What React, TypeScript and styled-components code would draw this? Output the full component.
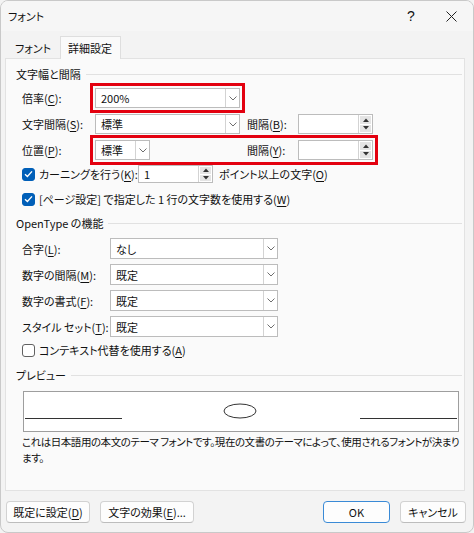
import React from 'react';
import styled, { createGlobalStyle } from 'styled-components';

const GlobalStyle = createGlobalStyle`
  html, body {
    margin: 0;
    padding: 0;
    background: #f3f3f3;
  }
  body {
    font-family: "Noto Sans CJK JP", "Noto Sans", sans-serif;
    font-size: 11px;
    color: #111;
    font-feature-settings: "palt" 1;
  }
  * {
    box-sizing: border-box;
  }
  u {
    text-underline-offset: 2px;
  }
`;

const Dialog = styled.div`
  width: 474px;
  height: 533px;
  display: flex;
  flex-direction: column;
  background: #f3f3f3;
  border: 1px solid #c9c9c9;
  border-radius: 8px;
  overflow: hidden;
`;

const TitleBar = styled.div`
  height: 30px;
  display: flex;
  align-items: center;
  padding-left: 7px;
  background: #f6f6f6;
`;

const Title = styled.div`
  flex: 1;
  line-height: 1;
`;

const CaptionButton = styled.div<{ $w: number }>`
  width: ${(p) => p.$w}px;
  height: 30px;
  display: flex;
  align-items: center;
  justify-content: center;
  font-size: 14px;
  font-family: "Liberation Sans", sans-serif;
`;

const TabRow = styled.div`
  display: flex;
  margin-top: 5px;
  padding-left: 6px;
  height: 22px;
  position: relative;
  z-index: 1;
`;

const Tab = styled.div<{ $active?: boolean }>`
  display: flex;
  align-items: center;
  padding: 0 8px 0 7px;
  height: 23px;
  background: ${(p) => (p.$active ? '#fafafa' : 'transparent')};
  border: 1px solid ${(p) => (p.$active ? '#dedede' : 'transparent')};
  border-bottom: none;
`;

const Panel = styled.div`
  margin: 0 8px 0 4px;
  height: 433px;
  background: #fafafa;
  border: 1px solid #e2e2e2;
  padding: 7px 2px 0 10px;
  display: flex;
  flex-direction: column;
`;

const SectionHeader = styled.div<{ $gap?: number }>`
  display: flex;
  align-items: center;
  gap: 5px;
  height: 16px;
  margin-top: ${(p) => p.$gap ?? 0}px;

  &::after {
    content: '';
    flex: 1;
    height: 1px;
    background: #e1e1e1;
  }
`;

const Row = styled.div<{ $gap: number; $h?: number }>`
  display: flex;
  align-items: center;
  height: ${(p) => p.$h ?? 20}px;
  margin-top: ${(p) => p.$gap}px;
  padding-left: 6px;
`;

const Label = styled.div<{ $w: number }>`
  width: ${(p) => p.$w}px;
  flex-shrink: 0;
  white-space: nowrap;
`;

const SideLabel = styled.div<{ $w: number; $auto?: boolean }>`
  width: ${(p) => p.$w}px;
  flex-shrink: 0;
  white-space: nowrap;
  margin-left: ${(p) => (p.$auto ? 'auto' : '7px')};
`;

const Highlight = styled.div<{ $w?: number }>`
  display: flex;
  align-items: center;
  width: ${(p) => (p.$w ? `${p.$w}px` : 'auto')};
  outline: 3px solid #e3000f;
  outline-offset: 2px;
`;

const ComboBox = styled.div<{ $w: number; $h?: number }>`
  display: flex;
  width: ${(p) => p.$w}px;
  height: ${(p) => p.$h ?? 20}px;
  background: #fff;
  border: 1px solid #bcbcbc;
  flex-shrink: 0;
`;

const ComboValue = styled.div`
  flex: 1;
  display: flex;
  align-items: center;
  padding-left: 5px;
  white-space: nowrap;
`;

const DropButton = styled.div`
  width: 14px;
  border-left: 1px solid #d3d3d3;
  display: flex;
  align-items: center;
  justify-content: center;
`;

const SpinBox = styled.div<{ $w: number; $h?: number }>`
  display: flex;
  width: ${(p) => p.$w}px;
  height: ${(p) => p.$h ?? 20}px;
  background: #fff;
  border: 1px solid #bcbcbc;
  flex-shrink: 0;
`;

const SpinValue = styled.div`
  flex: 1;
  display: flex;
  align-items: center;
  padding-left: 5px;
`;

const SpinButtons = styled.div`
  width: 14px;
  display: flex;
  flex-direction: column;
  gap: 1px;
  padding: 1px;
  border-left: 1px solid #d3d3d3;
`;

const SpinButton = styled.div`
  flex: 1;
  background: #e4e4e4;
  display: flex;
  align-items: center;
  justify-content: center;
`;

const CheckRow = styled.div<{ $w?: number }>`
  display: flex;
  align-items: center;
  gap: 4px;
  white-space: nowrap;
  flex-shrink: 0;
  width: ${(p) => (p.$w ? `${p.$w}px` : 'auto')};
`;

const CheckBox = styled.span<{ $checked?: boolean }>`
  width: 13px;
  height: 13px;
  border-radius: 3px;
  flex-shrink: 0;
  display: inline-flex;
  align-items: center;
  justify-content: center;
  background: ${(p) => (p.$checked ? '#005fb8' : '#fff')};
  border: 1px solid ${(p) => (p.$checked ? '#005fb8' : '#616161')};
`;

const TrailText = styled.div`
  margin-left: 6px;
  white-space: nowrap;
`;

const PreviewBox = styled.div`
  margin: 8px 3px 0 7px;
  height: 41px;
  background: #fff;
  border: 1px solid #9e9e9e;
  display: flex;
`;

const Description = styled.p`
  margin: 2px 0 0 6px;
  font-size: 10.5px;
  letter-spacing: -0.45px;
  line-height: 16px;
  white-space: nowrap;
`;

const Footer = styled.div`
  display: flex;
  align-items: center;
  gap: 10px;
  margin-top: 10px;
  padding: 0 7px 0 5px;
`;

const Button = styled.div<{ $w: number; $primary?: boolean }>`
  width: ${(p) => p.$w}px;
  height: 22px;
  display: flex;
  align-items: center;
  justify-content: center;
  white-space: nowrap;
  background: #fdfdfd;
  border: 1px solid ${(p) => (p.$primary ? '#3a8ad6' : '#d2d2d2')};
  border-bottom-color: ${(p) => (p.$primary ? '#3a8ad6' : '#bdbdbd')};
  border-radius: 4px;
`;

const Spacer = styled.div`
  flex: 1;
`;

const Chevron = () => (
  <svg width="8" height="5" viewBox="0 0 8 5">
    <path d="M0.5 0.5 L4 4 L7.5 0.5" fill="none" stroke="#6e6e6e" strokeWidth="1" />
  </svg>
);

const Combo = ({ w, h, value }: { w: number; h?: number; value: string }) => (
  <ComboBox $w={w} $h={h}>
    <ComboValue>{value}</ComboValue>
    <DropButton>
      <Chevron />
    </DropButton>
  </ComboBox>
);

const Spin = ({ w, h, value }: { w: number; h?: number; value?: string }) => (
  <SpinBox $w={w} $h={h}>
    <SpinValue>{value}</SpinValue>
    <SpinButtons>
      <SpinButton>
        <svg width="6" height="4" viewBox="0 0 6 4">
          <path d="M0 4 L3 0.5 L6 4 Z" fill="#333" />
        </svg>
      </SpinButton>
      <SpinButton>
        <svg width="6" height="4" viewBox="0 0 6 4">
          <path d="M0 0 L3 3.5 L6 0 Z" fill="#333" />
        </svg>
      </SpinButton>
    </SpinButtons>
  </SpinBox>
);

const Check = ({ checked }: { checked?: boolean }) => (
  <CheckBox $checked={checked}>
    {checked && (
      <svg width="9" height="8" viewBox="0 0 9 8">
        <path d="M1 4.2 L3.4 6.4 L8 1.4" fill="none" stroke="#fff" strokeWidth="1.4" />
      </svg>
    )}
  </CheckBox>
);

const openTypeRows = [
  { label: '合字', key: 'L', value: 'なし' },
  { label: '数字の間隔', key: 'M', value: '既定' },
  { label: '数字の書式', key: 'F', value: '既定' },
  { label: 'スタイル セット', key: 'T', value: '既定' },
];

export default function App() {
  return (
    <>
      <GlobalStyle />
      <Dialog>
        <TitleBar>
          <Title>フォント</Title>
          <CaptionButton $w={36}>?</CaptionButton>
          <CaptionButton $w={44}>
            <svg width="11" height="11" viewBox="0 0 11 11">
              <path d="M0.5 0.5 L10.5 10.5 M10.5 0.5 L0.5 10.5" stroke="#222" strokeWidth="1" />
            </svg>
          </CaptionButton>
        </TitleBar>

        <TabRow>
          <Tab>フォント</Tab>
          <Tab $active>詳細設定</Tab>
        </TabRow>

        <Panel>
          <SectionHeader>文字幅と間隔</SectionHeader>
          <Row $gap={6}>
            <Label $w={73}>
              倍率(<u>C</u>):
            </Label>
            <Highlight>
              <Combo w={145} value="200%" />
            </Highlight>
          </Row>
          <Row $gap={6}>
            <Label $w={73}>
              文字間隔(<u>S</u>):
            </Label>
            <Combo w={145} value="標準" />
            <SideLabel $w={51}>
              間隔(<u>B</u>):
            </SideLabel>
            <Spin w={75} />
          </Row>
          <Row $gap={6}>
            <Label $w={73}>
              位置(<u>P</u>):
            </Label>
            <Highlight $w={278}>
              <Combo w={55} value="標準" />
              <SideLabel $w={51} $auto>
                間隔(<u>Y</u>):
              </SideLabel>
              <Spin w={75} />
            </Highlight>
          </Row>
          <Row $gap={5} $h={18}>
            <CheckRow $w={116}>
              <Check checked />
              <span>
                カーニングを行う(<u>K</u>):
              </span>
            </CheckRow>
            <Spin w={75} h={18} value="1" />
            <TrailText>
              ポイント以上の文字(<u>O</u>)
            </TrailText>
          </Row>
          <Row $gap={7} $h={18}>
            <CheckRow>
              <Check checked />
              <span>
                [ページ設定] で指定した 1 行の文字数を使用する(<u>W</u>)
              </span>
            </CheckRow>
          </Row>

          <SectionHeader $gap={7}>OpenType の機能</SectionHeader>
          {openTypeRows.map((r, i) => (
            <Row key={r.key} $gap={i === 0 ? 7 : 5} $h={21}>
              <Label $w={88}>
                {r.label}(<u>{r.key}</u>):
              </Label>
              <Combo w={168} h={21} value={r.value} />
            </Row>
          ))}
          <Row $gap={4} $h={18}>
            <CheckRow>
              <Check />
              <span>
                コンテキスト代替を使用する(<u>A</u>)
              </span>
            </CheckRow>
          </Row>

          <SectionHeader $gap={8}>プレビュー</SectionHeader>
          <PreviewBox>
            <svg width="434" height="39" viewBox="0 0 434 39">
              <line x1="1" y1="26.5" x2="98" y2="26.5" stroke="#333" strokeWidth="1" />
              <line x1="336" y1="26.5" x2="433" y2="26.5" stroke="#333" strokeWidth="1" />
              <ellipse cx="216" cy="19" rx="16" ry="7" fill="none" stroke="#333" strokeWidth="1" />
            </svg>
          </PreviewBox>
          <Description>
            これは日本語用の本文のテーマ フォントです。現在の文書のテーマによって、使用されるフォントが決まり
            <br />
            ます。
          </Description>
        </Panel>

        <Footer>
          <Button $w={84}>
            既定に設定(<u>D</u>)
          </Button>
          <Button $w={94}>
            文字の効果(<u>E</u>)...
          </Button>
          <Spacer />
          <Button $w={67} $primary>
            OK
          </Button>
          <Button $w={66}>キャンセル</Button>
        </Footer>
      </Dialog>
    </>
  );
}
